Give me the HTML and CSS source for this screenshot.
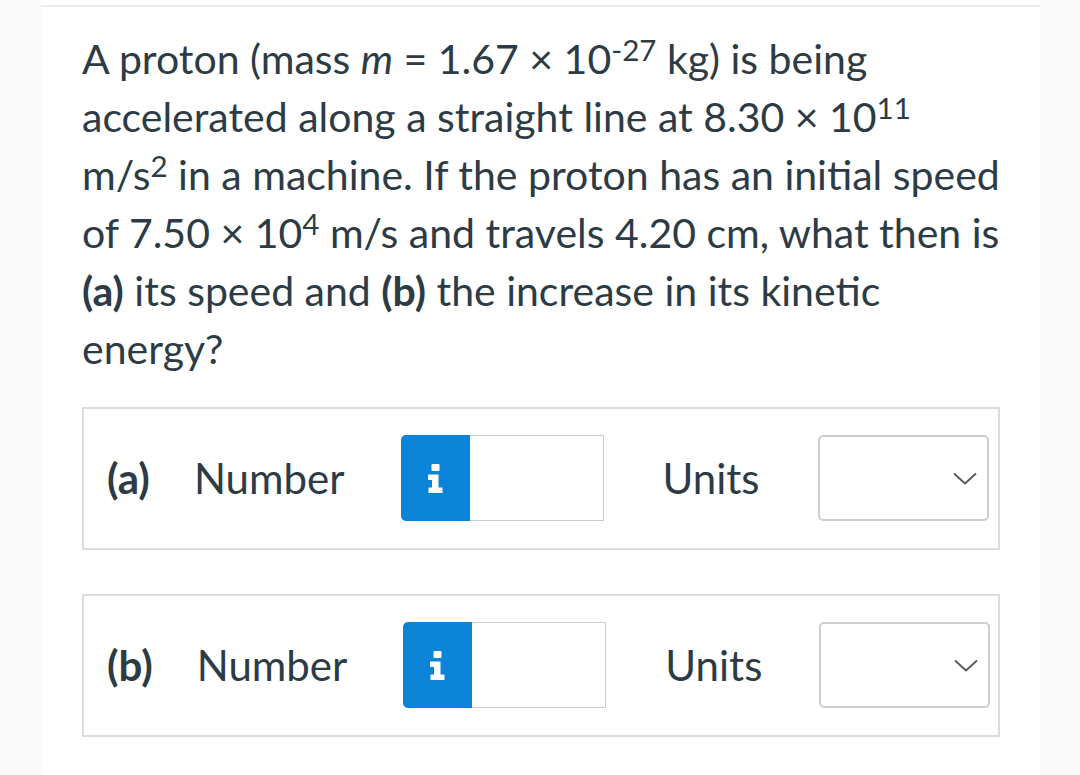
FILE: index.html
```html
<!DOCTYPE html>
<html lang="en">
<head>
<meta charset="utf-8">
<title>Question</title>
<link rel="stylesheet" href="styles.css">
</head>
<body>
<main class="panel">
  <div class="rule"></div>
  <p class="question">A proton (mass <i>m</i> = 1.67 × 10<sup>-27</sup> kg) is being<br>accelerated along a straight line at 8.30 × 10<sup>11</sup><br>m/s<sup>2</sup> in a machine. If the proton has an initial speed<br>of 7.50 × 10<sup>4</sup> m/s and travels 4.20 cm, what then is<br><b>(a)</b> its speed and <b>(b)</b> the increase in its kinetic<br>energy?</p>

  <div class="answer">
    <span class="part">(a)</span>
    <span class="label">Number</span>
    <div class="numfield">
      <span class="info"><svg width="17" height="30" viewBox="0 0 17 30"><rect x="4.5" y="0" width="8" height="7" rx="1" fill="#fff"/><path d="M1 10.5h10.5v13h4v5.5H1.5v-5.5h3.5v-7.5H1z" fill="#fff"/></svg></span>
      <span class="input"></span>
    </div>
    <span class="label units">Units</span>
    <div class="select"><svg class="chev" width="24" height="13" viewBox="0 0 24 13"><path d="M1 1.5l11 10 11-10" fill="none" stroke="#555" stroke-width="1.7"/></svg></div>
  </div>

  <div class="answer">
    <span class="part">(b)</span>
    <span class="label">Number</span>
    <div class="numfield">
      <span class="info"><svg width="17" height="30" viewBox="0 0 17 30"><rect x="4.5" y="0" width="8" height="7" rx="1" fill="#fff"/><path d="M1 10.5h10.5v13h4v5.5H1.5v-5.5h3.5v-7.5H1z" fill="#fff"/></svg></span>
      <span class="input"></span>
    </div>
    <span class="label units">Units</span>
    <div class="select"><svg class="chev" width="24" height="13" viewBox="0 0 24 13"><path d="M1 1.5l11 10 11-10" fill="none" stroke="#555" stroke-width="1.7"/></svg></div>
  </div>
</main>
</body>
</html>
```

FILE: styles.css
```css
html, body {
  margin: 0;
  padding: 0;
}
body {
  background: #fafafa;
  font-family: Lato, "Open Sans", "Liberation Sans", sans-serif;
  color: #2d3b45;
  height: 775px;
  overflow: hidden;
}
.panel {
  margin-left: 41px;
  width: 999px;
  min-height: 775px;
  background: #fff;
  padding: 5px 40px 0 41px;
  box-sizing: border-box;
}
.rule {
  height: 2px;
  background: #ebebeb;
  margin: 0 -40px 0 -41px;
}
.question {
  margin: 23px -40px 29px 0;
  font-size: 41px;
  line-height: 58px;
  white-space: nowrap;
}
.question sup {
  font-size: 0.72em;
  line-height: 1;
  vertical-align: 0.45em;
}
.question b {
  font-weight: 700;
}
.answer {
  display: flex;
  align-items: center;
  border: 2px solid #dcdcdc;
  padding: 26px 9px 27px 23px;
  margin-bottom: 44px;
  font-size: 42px;
}
.part {
  font-weight: 700;
  margin-right: 44px;
}
.label {
  margin-right: 56px;
}
.units {
  margin-left: 59px;
  margin-right: 57px;
}
.numfield {
  display: flex;
  height: 86px;
  flex-shrink: 0;
}
.info {
  width: 69px;
  height: 86px;
  background: #0b84d8;
  border-radius: 5px 0 0 5px;
  display: flex;
  align-items: center;
  justify-content: center;
}
.info svg {
  margin-top: 2px;
}
.input {
  width: 133px;
  height: 84px;
  border: 1px solid #c7cdd1;
  border-left: none;
  background: #fff;
}
.select {
  width: 157px;
  height: 82px;
  border: 2px solid #cfcfcf;
  border-radius: 5px;
  display: flex;
  align-items: center;
  justify-content: flex-end;
  padding-right: 10px;
  margin-left: auto;
  flex-shrink: 0;
}
.chev {
  display: block;
}
```
